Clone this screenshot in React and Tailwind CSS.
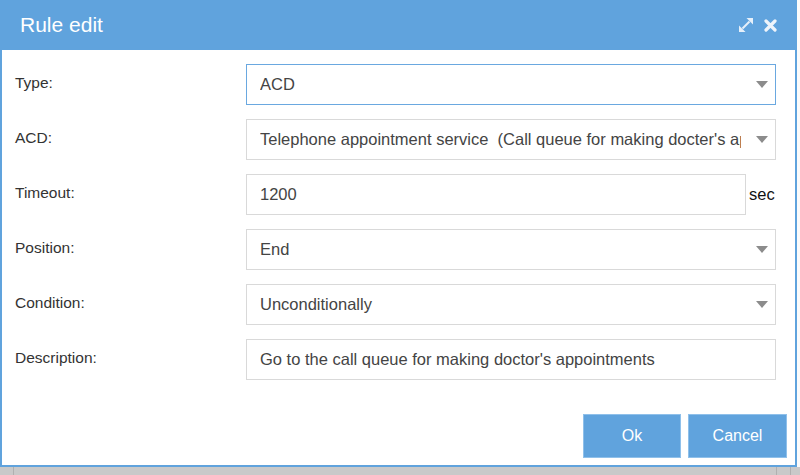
const font = { fontFamily: '"Liberation Sans", Arial, sans-serif' }

function Caret() {
  return (
    <svg width="12" height="7" viewBox="0 0 12 7" className="shrink-0">
      <path d="M0 0 H12 L6 7 Z" fill="#8c8c8c" />
    </svg>
  )
}

function Field({ label, value, select, focused, suffix }) {
  return (
    <div className="flex items-center h-[41px]">
      <div className="w-[231px] shrink-0 text-[15.5px] text-[#333] -mt-[3px]">{label}</div>
      <div className="flex items-center w-[530px]">
        <div
          className={`flex items-center h-[41px] bg-white border ${
            focused ? 'border-[#6aa8e0]' : 'border-[#d9d9d9]'
          } ${suffix ? 'w-[500px]' : 'w-[530px]'} pl-[13px] ${select ? 'pr-[7px]' : 'pr-[10px]'}`}
        >
          <span className="flex-1 min-w-0 text-[16.5px] text-[#444] whitespace-pre overflow-hidden">{value}</span>
          {select && (
            <span className="pl-[15px]">
              <Caret />
            </span>
          )}
        </div>
        {suffix && <span className="ml-[3px] text-[16.5px] text-[#111]">{suffix}</span>}
      </div>
    </div>
  )
}

export default function App() {
  return (
    <div className="w-[800px] h-[475px] bg-[#fbfbfb] overflow-hidden relative" style={font}>
      <div className="w-[797px] h-[467px] border-x-2 border-b-2 border-[#60a3dd] bg-white flex flex-col">
        {/* Header */}
        <div className="h-[50px] bg-[#60a3dd] flex items-center justify-between pl-[20px] pr-[20px] -mx-[2px]">
          <span className="text-white text-[21px]">Rule edit</span>
          <div className="flex items-center gap-[10px]">
            <svg width="16" height="16" viewBox="0 0 16 16">
              <path d="M4.5 11.5 L11.5 4.5" stroke="#e6f0fa" strokeWidth="2" />
              <path d="M15 1 L15 7.5 L8.5 1 Z" fill="#e6f0fa" />
              <path d="M1 15 L1 8.5 L7.5 15 Z" fill="#e6f0fa" />
            </svg>
            <svg width="13" height="13" viewBox="0 0 13 13" stroke="#eef4fb" strokeWidth="3.2" strokeLinecap="round">
              <path d="M2 2 L11 11 M11 2 L2 11" />
            </svg>
          </div>
        </div>

        {/* Form */}
        <div className="flex flex-col gap-[14px] pt-[14px] pl-[13px]">
          <Field label="Type:" value="ACD" select focused />
          <Field
            label="ACD:"
            value="Telephone appointment service  (Call queue for making docter's appointments)"
            select
          />
          <Field label="Timeout:" value="1200" suffix="sec" />
          <Field label="Position:" value="End" select />
          <Field label="Condition:" value="Unconditionally" select />
          <Field label="Description:" value="Go to the call queue for making doctor's appointments" />
        </div>

        {/* Buttons */}
        <div className="flex-1 flex items-end justify-end gap-[7px] pr-[8px] pb-[7px]">
          <button className="w-[98px] h-[44px] bg-[#60a3dd] text-white text-[16px] border border-[#8fc0ea]">Ok</button>
          <button className="w-[99px] h-[44px] bg-[#60a3dd] text-white text-[16px] border border-[#8fc0ea]">Cancel</button>
        </div>
      </div>

      {/* Footer strip */}
      <div className="h-[8px] bg-[#c9c9c9] flex">
        <div className="w-[14px] border-r border-[#b0b0b0]" />
        <div className="w-[763px] border-r border-[#b0b0b0]" />
        <div className="w-[14px] border-r border-[#b0b0b0]" />
      </div>
    </div>
  )
}
